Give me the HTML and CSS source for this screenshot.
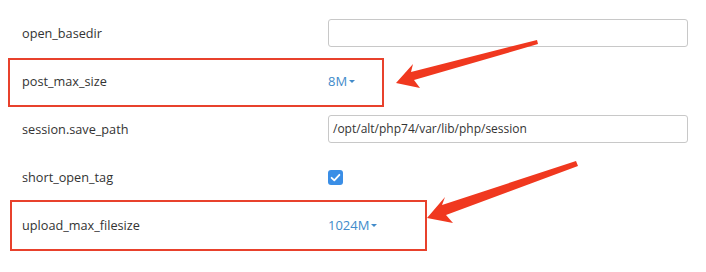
FILE: index.html
```html
<!DOCTYPE html>
<html>
<head>
<meta charset="utf-8">
<link rel="stylesheet" href="styles.css">
</head>
<body>
<div class="page">
  <div class="settings">
    <div class="row">
      <div class="label">open_basedir</div>
      <div class="value"><div class="field"></div></div>
    </div>
    <div class="row">
      <div class="label">post_max_size</div>
      <div class="value"><span class="dropdown">8M<span class="caret"></span></span></div>
    </div>
    <div class="row">
      <div class="label">session.save_path</div>
      <div class="value"><div class="field">/opt/alt/php74/var/lib/php/session</div></div>
    </div>
    <div class="row">
      <div class="label">short_open_tag</div>
      <div class="value">
        <span class="checkbox">
          <svg width="15" height="15" viewBox="0 0 15 15"><path d="M3.6 7.8 L6.3 10.3 L11.4 4.8" fill="none" stroke="#fff" stroke-width="1.8" stroke-linecap="round" stroke-linejoin="round"/></svg>
        </span>
      </div>
    </div>
    <div class="row">
      <div class="label">upload_max_filesize</div>
      <div class="value"><span class="dropdown">1024M<span class="caret"></span></span></div>
    </div>
  </div>
  <div class="mark mark-1"></div>
  <div class="mark mark-2"></div>
  <svg class="arrows" width="706" height="272" viewBox="0 0 706 272">
    <polygon fill="#f0381f" points="396,83 413,64 411,72 537,40 538,44 414,80 420,88"/>
    <polygon fill="#f0381f" points="427,218 445,197 442,205 576,161 578,166 446,215 453,223"/>
  </svg>
</div>
</body>
</html>
```
FILE: styles.css
```css
html, body {
  margin: 0;
  padding: 0;
  background: #fff;
}
.page {
  position: relative;
  width: 706px;
  height: 272px;
  overflow: hidden;
  font-family: "Open Sans", "Liberation Sans", sans-serif;
  font-size: 12.7px;
  color: #333;
}
.settings {
  display: flex;
  flex-direction: column;
  padding-top: 9px;
}
.row {
  display: flex;
  align-items: center;
  height: 48px;
}
.label {
  width: 306px;
  padding-left: 22px;
}
.value {
  display: flex;
  align-items: center;
}
.field {
  box-sizing: border-box;
  width: 360px;
  height: 28px;
  border: 1px solid #c8c8c8;
  border-radius: 3px;
  padding: 0 4px;
  line-height: 26px;
  font-size: 12px;
  color: #333;
}
.dropdown {
  color: #428bca;
  font-size: 13px;
  display: inline-flex;
  align-items: center;
}
.caret {
  display: inline-block;
  width: 0;
  height: 0;
  margin-left: 2px;
  border-left: 3px solid transparent;
  border-right: 3px solid transparent;
  border-top: 3px solid #428bca;
}
.checkbox {
  display: inline-flex;
  width: 15px;
  height: 15px;
  border-radius: 3px;
  background: #3a8ee6;
  margin-top: 1px;
}
.mark {
  position: absolute;
  border: 2px solid #e8412c;
  box-sizing: border-box;
}
.mark-1 {
  left: 8px;
  top: 58px;
  width: 376px;
  height: 49px;
}
.mark-2 {
  left: 10px;
  top: 200px;
  width: 417px;
  height: 51px;
}
.arrows {
  position: absolute;
  left: 0;
  top: 0;
}
```
